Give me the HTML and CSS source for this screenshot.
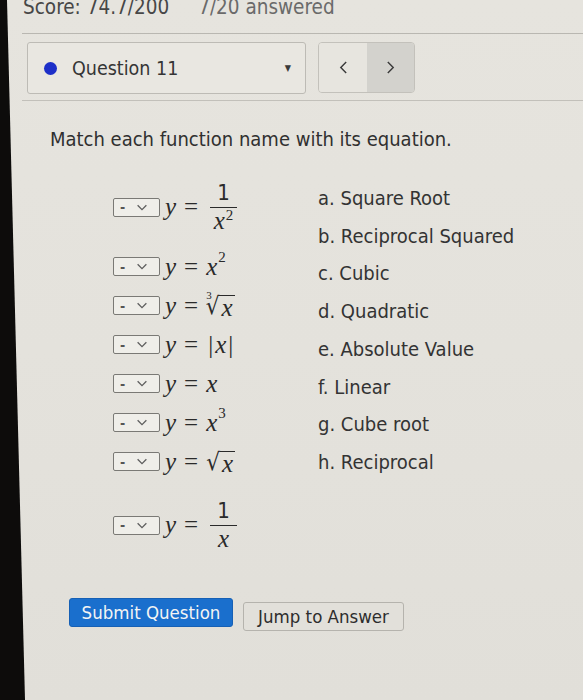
FILE: index.html
```html
<!DOCTYPE html>
<html lang="en">
<head>
<meta charset="utf-8">
<title>Question 11</title>
<link rel="stylesheet" href="styles.css">
</head>
<body>
<div class="page">
  <div class="score-row">
    <span class="score">Score: 74.7/200</span>
    <span class="answered">7/20 answered</span>
  </div>
  <div class="nav-row">
    <div class="qselect">
      <span class="dot"></span>
      <span class="qlabel">Question 11</span>
      <span class="caret">&#9660;</span>
    </div>
    <div class="qnav">
      <span class="prev"><svg viewBox="0 0 10 14" width="9" height="13"><path d="M8 1 L2 7 L8 13" fill="none" stroke="#3c3c3c" stroke-width="1.6"/></svg></span>
      <span class="next"><svg viewBox="0 0 10 14" width="9" height="13"><path d="M2 1 L8 7 L2 13" fill="none" stroke="#3c3c3c" stroke-width="1.6"/></svg></span>
    </div>
  </div>
  <div class="content">
    <p class="prompt">Match each function name with its equation.</p>
    <div class="match">
      <div class="eqs">
        <div class="row tall">
          <span class="sel"><span class="dash">-</span><svg class="chev" viewBox="0 0 12 8" width="12" height="7"><path d="M1 1.5 L6 6.5 L11 1.5" fill="none" stroke="#5f5f5f" stroke-width="1.5"/></svg></span>
          <span class="math"><i>y</i><span class="eq">=</span><span class="frac"><span class="num">1</span><span class="den"><i>x</i><sup>2</sup></span></span></span>
        </div>
        <div class="row first-short">
          <span class="sel"><span class="dash">-</span><svg class="chev" viewBox="0 0 12 8" width="12" height="7"><path d="M1 1.5 L6 6.5 L11 1.5" fill="none" stroke="#5f5f5f" stroke-width="1.5"/></svg></span>
          <span class="math"><i>y</i><span class="eq">=</span><i>x</i><sup>2</sup></span>
        </div>
        <div class="row">
          <span class="sel"><span class="dash">-</span><svg class="chev" viewBox="0 0 12 8" width="12" height="7"><path d="M1 1.5 L6 6.5 L11 1.5" fill="none" stroke="#5f5f5f" stroke-width="1.5"/></svg></span>
          <span class="math"><i>y</i><span class="eq">=</span><span class="root"><sup class="idx">3</sup><span class="rad">&radic;</span><span class="under"><i>x</i></span></span></span>
        </div>
        <div class="row">
          <span class="sel"><span class="dash">-</span><svg class="chev" viewBox="0 0 12 8" width="12" height="7"><path d="M1 1.5 L6 6.5 L11 1.5" fill="none" stroke="#5f5f5f" stroke-width="1.5"/></svg></span>
          <span class="math"><i>y</i><span class="eq">=</span><span class="bar">|</span><i>x</i><span class="bar">|</span></span>
        </div>
        <div class="row">
          <span class="sel"><span class="dash">-</span><svg class="chev" viewBox="0 0 12 8" width="12" height="7"><path d="M1 1.5 L6 6.5 L11 1.5" fill="none" stroke="#5f5f5f" stroke-width="1.5"/></svg></span>
          <span class="math"><i>y</i><span class="eq">=</span><i>x</i></span>
        </div>
        <div class="row">
          <span class="sel"><span class="dash">-</span><svg class="chev" viewBox="0 0 12 8" width="12" height="7"><path d="M1 1.5 L6 6.5 L11 1.5" fill="none" stroke="#5f5f5f" stroke-width="1.5"/></svg></span>
          <span class="math"><i>y</i><span class="eq">=</span><i>x</i><sup>3</sup></span>
        </div>
        <div class="row">
          <span class="sel"><span class="dash">-</span><svg class="chev" viewBox="0 0 12 8" width="12" height="7"><path d="M1 1.5 L6 6.5 L11 1.5" fill="none" stroke="#5f5f5f" stroke-width="1.5"/></svg></span>
          <span class="math"><i>y</i><span class="eq">=</span><span class="root"><span class="rad">&radic;</span><span class="under"><i>x</i></span></span></span>
        </div>
        <div class="row tall last">
          <span class="sel"><span class="dash">-</span><svg class="chev" viewBox="0 0 12 8" width="12" height="7"><path d="M1 1.5 L6 6.5 L11 1.5" fill="none" stroke="#5f5f5f" stroke-width="1.5"/></svg></span>
          <span class="math"><i>y</i><span class="eq">=</span><span class="frac"><span class="num">1</span><span class="den"><i>x</i></span></span></span>
        </div>
      </div>
      <ul class="opts">
        <li>a. Square Root</li>
        <li>b. Reciprocal Squared</li>
        <li>c. Cubic</li>
        <li>d. Quadratic</li>
        <li>e. Absolute Value</li>
        <li>f. Linear</li>
        <li>g. Cube root</li>
        <li>h. Reciprocal</li>
      </ul>
    </div>
    <div class="buttons">
      <button class="btn primary">Submit Question</button>
      <button class="btn secondary">Jump to Answer</button>
    </div>
  </div>
</div>
</body>
</html>
```

FILE: styles.css
```css
html, body {
  margin: 0;
  padding: 0;
}
body {
  background: #0d0c0b;
  font-family: "DejaVu Sans Condensed", "DejaVu Sans", sans-serif;
  font-stretch: condensed;
  color: #353535;
}
.page {
  min-height: 700px;
  background: linear-gradient(180deg, #e6e4de 0%, #e4e2dc 50%, #e1dfd9 100%);
  clip-path: polygon(7px 0, 100% 0, 100% 100%, 25px 100%);
  overflow: hidden;
}
.score-row {
  height: 34px;
  box-sizing: border-box;
  margin-left: 22px;
  border-bottom: 1px solid #b9b7b1;
  display: flex;
  gap: 29px;
  padding-left: 1px;
  font-size: 20.5px;
  color: #474747;
}
.score-row span {
  line-height: 22px;
  margin-top: -4px;
}
.answered { color: #6a6a6a; }
.nav-row {
  margin-left: 22px;
  padding: 8px 0 6px 5px;
  border-bottom: 1px solid #c2c0ba;
  display: flex;
  gap: 12px;
}
.qselect {
  width: 279px;
  height: 52px;
  box-sizing: border-box;
  border: 1px solid #bdbbb5;
  border-radius: 3px;
  background: #e9e7e1;
  display: flex;
  align-items: center;
  padding-left: 16px;
}
.dot {
  width: 13px;
  height: 13px;
  border-radius: 50%;
  background: #1d2fc8;
  margin-right: 15px;
}
.qlabel {
  font-size: 19.5px;
  color: #353535;
  flex: 1;
}
.caret {
  font-size: 9px;
  color: #3a3a3a;
  margin-right: 14px;
}
.qnav {
  width: 97px;
  height: 51px;
  box-sizing: border-box;
  border: 1px solid #c3c1bb;
  border-radius: 4px;
  display: flex;
  overflow: hidden;
}
.qnav span {
  display: flex;
  align-items: center;
  justify-content: center;
}
.qnav svg { display: block; }
.prev { width: 48px; background: #e7e5df; }
.next { flex: 1; background: #d3d2cd; }
.content {
  padding-left: 50px;
}
.prompt {
  margin: 26px 0 0 0;
  font-size: 20px;
  line-height: 24px;
  color: #303030;
}
.match {
  display: flex;
  margin-top: 28px;
}
.eqs {
  width: 205px;
  padding-left: 63px;
  display: flex;
  flex-direction: column;
}
.row {
  height: 39px;
  display: flex;
  align-items: center;
}
.row.tall { height: 56px; }
.row.first-short { margin-top: 12px; }
.row.last { margin-top: 16px; }
.sel {
  width: 47px;
  height: 19px;
  box-sizing: border-box;
  border: 1px solid #7a7975;
  border-radius: 2px;
  background: #efeee9;
  display: flex;
  align-items: center;
  padding-left: 6px;
  margin-right: 5px;
}
.dash {
  font-size: 14px;
  font-weight: bold;
  color: #555;
  width: 16px;
  line-height: 1;
}
.chev { display: block; }
.math {
  font-family: "Liberation Serif", "DejaVu Serif", serif;
  font-size: 25px;
  color: #2a2a2a;
  display: flex;
  align-items: center;
}
.math i { font-style: italic; }
.eq {
  margin: 0 8px;
  font-style: normal;
}
.math sup {
  font-size: 15px;
  align-self: flex-start;
  margin-top: -4px;
  margin-left: 1px;
}
.frac {
  display: inline-flex;
  flex-direction: column;
  align-items: center;
  margin-left: 4px;
}
.num {
  font-size: 22px;
  line-height: 22px;
  padding: 0 7px 3px;
  border-bottom: 1.3px solid #2a2a2a;
  font-family: "DejaVu Sans", sans-serif;
}
.den {
  display: flex;
  line-height: 24px;
  padding-top: 1px;
}
.den sup { margin-top: -6px; }
.root {
  display: inline-flex;
  align-items: flex-end;
}
.root .idx {
  font-size: 11px;
  margin: 0 -6px 0 0;
  align-self: flex-start;
  margin-top: -4px;
  position: relative;
  z-index: 1;
}
.rad {
  font-family: "DejaVu Serif", serif;
  font-size: 24px;
  line-height: 26px;
}
.under {
  border-top: 1.3px solid #2a2a2a;
  line-height: 23px;
  padding: 0 2px;
  margin-top: 2px;
}
.bar {
  font-style: normal;
  padding: 0 2px;
}
.opts {
  list-style: none;
  margin: 1px 0 0 0;
  padding: 0;
}
.opts li {
  font-size: 20px;
  line-height: 37.7px;
  color: #333;
}
.buttons {
  display: flex;
  gap: 10px;
  margin-top: 45px;
  padding-left: 19px;
  align-items: flex-start;
}
.btn {
  font-family: "DejaVu Sans Condensed", "DejaVu Sans", sans-serif;
  font-stretch: condensed;
  font-size: 18.5px;
  height: 29px;
  border-radius: 3px;
  padding: 0 10px;
}
.primary {
  background: #1a6fcd;
  border: 1px solid #1660b5;
  color: #f4f4f4;
  width: 164px;
}
.secondary {
  background: #e2e0da;
  border: 1px solid #b5b3ad;
  color: #2d2d2d;
  width: 161px;
  margin-top: 4px;
}
```
